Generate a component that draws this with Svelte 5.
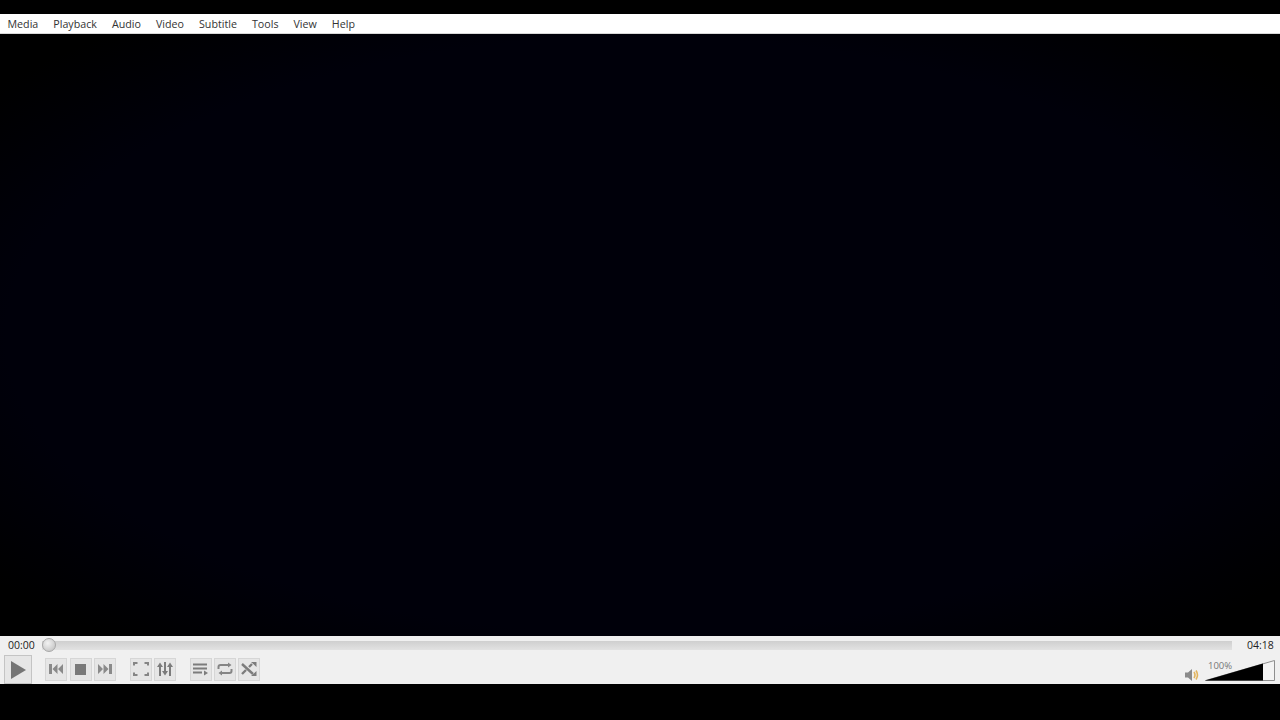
<script>
  const menus = ["Media", "Playback", "Audio", "Video", "Subtitle", "Tools", "View", "Help"];
</script>

<div class="player">
  <div class="menubar">
    {#each menus as m}
      <span>{m}</span>
    {/each}
  </div>

  <div class="video"></div>

  <div class="controls">
    <div class="seek">
      <span class="time">00:00</span>
      <div class="track"><div class="knob"></div></div>
      <span class="time end">04:18</span>
    </div>
    <div class="buttons">
      <button class="btn play" aria-label="Play">
        <svg width="15" height="18" viewBox="0 0 15 18"><path d="M0 0 L15 9 L0 18 Z" fill="#757575" /></svg>
      </button>
      <div class="group first">
        <button class="btn" aria-label="Previous">
          <svg width="14" height="10" viewBox="0 0 14 10"><path d="M0 0h3v10H0z M8.500 0v10L3.500 5z M14 0v10L9 5z" fill="#8a8a8a" /></svg>
        </button>
        <button class="btn" aria-label="Stop">
          <svg width="11" height="11" viewBox="0 0 11 11"><rect width="11" height="11" fill="#7a7a7a" /></svg>
        </button>
        <button class="btn" aria-label="Next">
          <svg width="14" height="10" viewBox="0 0 14 10"><path d="M0 0v10L5 5z M5.500 0v10L10.500 5z M11 0h3v10h-3z" fill="#8a8a8a" /></svg>
        </button>
      </div>
      <div class="group">
        <button class="btn" aria-label="Fullscreen">
          <svg width="16" height="14" viewBox="0 0 16 14"><path d="M1 3.500V1h3.500 M11.500 1h3.500v2.500 M15 10.500V13h-3.500 M4.500 13H1v-2.500" fill="none" stroke="#858585" stroke-width="2" /></svg>
        </button>
        <button class="btn" aria-label="Extended settings">
          <svg width="16" height="14" viewBox="0 0 16 14"><path d="M3 3v11 M8 0v11 M13 3v11" stroke="#7c7c7c" stroke-width="2" /><path d="M0 5L3 0.500 6 5z M5 9L8 13.500 11 9z M10 5L13 0.500 16 5z" fill="#7c7c7c" /></svg>
        </button>
      </div>
      <div class="group">
        <button class="btn" aria-label="Playlist">
          <svg width="16" height="13" viewBox="0 0 16 13"><path d="M0 1.500h14 M0 5.500h14 M0 9.500h9" stroke="#7c7c7c" stroke-width="1.800" /><path d="M11 7.500v5l4-2.500z" fill="#7c7c7c" /></svg>
        </button>
        <button class="btn" aria-label="Loop">
          <svg width="16" height="14" viewBox="0 0 16 14"><path d="M1.500 7V5q0-2 2-2h8 M14.500 7v2q0 2-2 2h-8" fill="none" stroke="#858585" stroke-width="2" /><path d="M11 0.500v5l3.500-2.500z M5 8.500v5L1.500 11z" fill="#858585" /></svg>
        </button>
        <button class="btn" aria-label="Random">
          <svg width="16" height="14" viewBox="0 0 16 14"><path d="M1 2l11 10 M1 12l4-4 M8 5l3-3" fill="none" stroke="#7c7c7c" stroke-width="2.400" /><path d="M10 0h5.500v5z M10 14h5.500V9z" fill="#7c7c7c" /></svg>
        </button>
      </div>
      <div class="volume">
        <svg class="speaker" width="14" height="12" viewBox="0 0 14 12">
          <path d="M0 3.500h3l4-3.500v12l-4-3.500H0z" fill="#8a8a8a" />
          <path d="M9 3q2 3 0 6 M11 1.500q3 4.500 0 9" fill="none" stroke="#e2b45e" stroke-width="1.600" />
        </svg>
        <div class="slider">
          <span class="pct">100%</span>
          <svg width="70" height="21" viewBox="0 0 70 21">
            <path d="M0.500 20.500L69.500 0.500V20.500Z" fill="#f4f4f4" stroke="#8f8f8f" />
            <path d="M0 20.500L58 3.500V20.500Z" fill="#000" />
          </svg>
        </div>
      </div>
    </div>
  </div>
</div>

<style>
  :global(body) {
    margin: 0;
    background: #000;
  }
  .player {
    height: 720px;
    padding: 14px 0 36px;
    box-sizing: border-box;
    display: flex;
    flex-direction: column;
    font-family: "Open Sans", "Noto Sans", sans-serif;
    background: #000;
    overflow: hidden;
  }
  .menubar {
    height: 20px;
    flex: none;
    background: #fff;
    display: flex;
    align-items: center;
    gap: 15px;
    padding-left: 7.500px;
    padding-bottom: 1px;
    box-sizing: border-box;
    font-size: 10.700px;
    color: #333;
    box-shadow: inset 0 -1px 0 #d8d8d8;
  }
  .video {
    flex: 1;
    background: radial-gradient(ellipse at center, #00000a 0%, #00000a 70%, #000 92%);
  }
  .controls {
    height: 48px;
    flex: none;
    background: #f0f0f0;
    display: flex;
    flex-direction: column;
  }
  .seek {
    height: 18px;
    flex: none;
    display: flex;
    align-items: center;
    font-size: 10.500px;
    color: #222;
  }
  .time {
    width: 42px;
    padding-left: 8px;
    box-sizing: border-box;
    flex: none;
  }
  .time.end {
    width: 48px;
    padding-left: 15px;
  }
  .track {
    flex: 1;
    height: 9px;
    position: relative;
    background: linear-gradient(#cfcfcf, #e2e2e2);
  }
  .knob {
    position: absolute;
    left: 0;
    top: -3px;
    width: 14px;
    height: 14px;
    box-sizing: border-box;
    border-radius: 50%;
    border: 1px solid #a8a8a8;
    background: radial-gradient(circle at 40% 35%, #f2f2f2, #bdbdbd);
  }
  .buttons {
    flex: 1;
    display: flex;
    align-items: center;
    padding-left: 4px;
    padding-bottom: 1px;
    box-sizing: border-box;
  }
  .btn {
    width: 22px;
    height: 23px;
    padding: 0;
    box-sizing: border-box;
    border: 1px solid #d6d6d6;
    background: #e6e6e6;
    display: flex;
    align-items: center;
    justify-content: center;
  }
  .btn.play {
    width: 28px;
    height: 29px;
    margin-top: 1px;
    border-color: #c4c4c4;
  }
  .group {
    display: flex;
    gap: 2px;
    margin-left: 14px;
  }
  .group.first {
    margin-left: 13px;
    gap: 2.500px;
  }
  .volume {
    margin-left: auto;
    margin-right: 5px;
    display: flex;
    align-items: flex-end;
    gap: 6px;
    align-self: flex-end;
    margin-bottom: 3px;
  }
  .slider {
    position: relative;
    height: 21px;
  }
  .slider svg {
    display: block;
  }
  .pct {
    position: absolute;
    left: 3px;
    top: -1px;
    font-size: 9.500px;
    color: #777;
  }
</style>
